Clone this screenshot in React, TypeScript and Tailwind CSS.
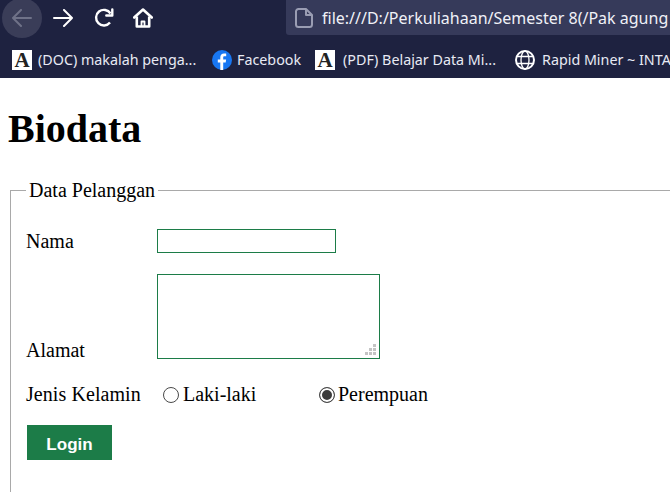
function ArrowIcon({ flip, color }: { flip?: boolean; color: string }) {
	return (
		<svg width="20" height="18" viewBox="0 0 20 18" fill="none" stroke={color} strokeWidth="2" strokeLinecap="round" strokeLinejoin="round" className={flip ? "-scale-x-100" : ""}>
			<path d="M1 9h18M11 1l8 8-8 8" />
		</svg>
	);
}

function ReloadIcon() {
	return (
		<svg width="20" height="20" viewBox="0 0 20 20" fill="none" stroke="white" strokeWidth="2.4" strokeLinejoin="round">
			<path d="M16 14.500A7.800 7.800 0 1 1 16.500 5.500" />
			<path d="M18.300 1.500v6h-6" strokeLinecap="round" />
		</svg>
	);
}

function HomeIcon() {
	return (
		<svg width="20" height="20" viewBox="0 0 20 20" fill="none" stroke="white" strokeWidth="2.600" strokeLinejoin="round">
			<path d="M1.200 9.500 10 1.500l8.800 8" strokeLinecap="round" />
			<path d="M3.800 8.500V18.500h12.400V8.500" />
			<path d="M8.500 18.500v-5h3v5" strokeWidth="1.800" />
		</svg>
	);
}

function FileIcon() {
	return (
		<svg width="18" height="20" viewBox="0 0 18 20" fill="none" stroke="#9a9db3" strokeWidth="2" strokeLinejoin="round">
			<path d="M3.500 1h7.500l6 6v9.500a2.500 2.500 0 0 1-2.500 2.500h-11A2.500 2.500 0 0 1 1 16.500v-13A2.500 2.500 0 0 1 3.500 1z" />
			<path d="M11 1v6h6" />
		</svg>
	);
}

function GlobeIcon() {
	return (
		<svg width="20" height="20" viewBox="0 0 20 20" fill="none" stroke="white" className="shrink-0">
			<circle cx="10" cy="10" r="9" strokeWidth="2" />
			<ellipse cx="10" cy="10" rx="4" ry="9" strokeWidth="1.300" />
			<path d="M2 6.500h16M2 13.500h16" strokeWidth="1.300" />
		</svg>
	);
}

function AcademiaIcon() {
	return (
		<div className="flex h-5 w-5 shrink-0 items-center justify-center bg-white font-['Liberation_Serif',serif] text-[21px] font-bold leading-none text-[#222]">
			A
		</div>
	);
}

function FacebookIcon() {
	return (
		<svg width="20" height="20" viewBox="0 0 20 20" className="shrink-0">
			<circle cx="10" cy="10" r="10" fill="#1877f2" />
			<path d="M11.200 20v-7.600h2.500l.4-3h-2.900V7.700c0-.9.300-1.400 1.500-1.400h1.500V3.700c-.3 0-1.200-.1-2.200-.1-2.200 0-3.700 1.300-3.700 3.800v2H5.800v3h2.500V20z" fill="white" />
		</svg>
	);
}

function Bookmark({ icon, label, width, gap }: { icon: JSX.Element; label: string; width: string; gap: string }) {
	return (
		<div className={`flex shrink-0 items-center ${gap} ${width}`}>
			{icon}
			<span className="whitespace-nowrap text-[14.3px] text-[#e8eaf4]">{label}</span>
		</div>
	);
}

function BrowserBar() {
	return (
		<div className="h-[78px] bg-[#1e2240] font-['Noto_Sans',sans-serif]">
			<div className="flex h-[35px] items-center">
				<div className="ml-[2px] flex h-10 w-10 shrink-0 items-center justify-center rounded-full bg-[#3a3d58]">
					<ArrowIcon flip color="#6f7288" />
				</div>
				<div className="ml-[11px]">
					<ArrowIcon color="white" />
				</div>
				<div className="ml-[21px]">
					<ReloadIcon />
				</div>
				<div className="ml-[19px]">
					<HomeIcon />
				</div>
				<div className="ml-[133px] flex h-[35px] flex-1 items-center overflow-hidden rounded-bl-[3px] bg-[#363a5a] pl-[9px]">
					<FileIcon />
					<span className="ml-[9px] whitespace-nowrap text-[16px] text-[#f0f1f7]">
						file:///D:/Perkuliahaan/Semester 8(/Pak agung
					</span>
				</div>
			</div>
			<div className="flex h-[43px] items-center pt-[7px] pl-3">
				<Bookmark icon={<AcademiaIcon />} label="(DOC) makalah penga..." width="w-[200px]" gap="gap-[6px]" />
				<Bookmark icon={<FacebookIcon />} label="Facebook" width="w-[103px]" gap="gap-[5px]" />
				<Bookmark icon={<AcademiaIcon />} label="(PDF) Belajar Data Mi..." width="w-[200px]" gap="gap-[8px]" />
				<Bookmark icon={<GlobeIcon />} label="Rapid Miner ~ INTA" width="w-[155px]" gap="gap-[7px]" />
			</div>
		</div>
	);
}

function Biodata() {
	return (
		<div className="font-['Liberation_Serif',serif] text-[20px] leading-[23px] text-black">
			<h1 className="pl-2 pt-[28px] text-[40px] font-bold leading-[46px]">Biodata</h1>
			<fieldset className="ml-[10px] mr-[-20px] mt-[27px] border border-[#a9a9a9] px-[15px] pb-8 pt-[27px]">
				<legend className="px-[3px]">Data Pelanggan</legend>
				<div className="flex items-end">
					<label className="w-[131px] shrink-0">Nama</label>
					<input className="h-6 w-[179px] border border-[#1c7c48] bg-white" />
				</div>
				<div className="mt-[21px] flex items-end">
					<label className="mb-[-3px] w-[131px] shrink-0">Alamat</label>
					<div className="relative h-[85px] w-[223px]">
						<textarea className="block h-full w-full resize-none border border-[#1c7c48] bg-white" />
						<svg width="12" height="12" viewBox="0 0 12 12" fill="#c4c4c4" className="absolute bottom-[3px] right-[3px]">
							<path d="M8 0h3v3H8zM4 4h3v3H4zM8 4h3v3H8zM0 8h3v3H0zM4 8h3v3H4zM8 8h3v3H8z" />
						</svg>
					</div>
				</div>
				<div className="mt-[24px] flex items-center">
					<span className="w-[137px] shrink-0 tracking-[0.07px]">Jenis Kelamin</span>
					<input type="radio" name="jk" className="h-4 w-4 appearance-none rounded-full border border-[#4a4a4a] bg-white" />
					<span className="ml-[4px] w-[136px] shrink-0">Laki-laki</span>
					<input type="radio" name="jk" defaultChecked className="h-4 w-4 appearance-none rounded-full border border-[#4a4a4a] bg-white checked:bg-[#3c3c3c] checked:shadow-[inset_0_0_0_2px_white]" />
					<span className="ml-[3px]">Perempuan</span>
				</div>
				<button className="ml-[1px] mt-[19px] block h-[35px] w-[85px] bg-[#1c7c48] pt-[4px] font-['Liberation_Sans',sans-serif] text-[17px] font-bold text-white">
					Login
				</button>
			</fieldset>
		</div>
	);
}

export default function App() {
	return (
		<div className="h-[492px] w-[670px] overflow-hidden bg-white">
			<BrowserBar />
			<Biodata />
		</div>
	);
}
